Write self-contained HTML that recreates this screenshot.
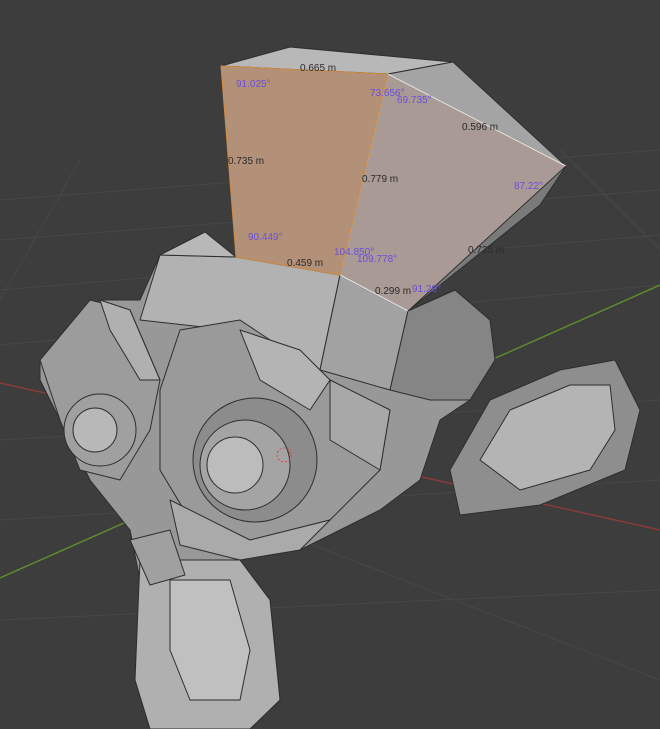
<!DOCTYPE html>
<html><head><meta charset="utf-8"><style>
html,body{margin:0;padding:0;background:#3d3d3d;width:660px;height:729px;overflow:hidden}
svg{display:block}
text{font-family:"Liberation Sans",sans-serif;font-size:10px}
.b{fill:#6a4fd8}.k{fill:#2a2a2a}
</style></head><body>
<svg width="660" height="729" viewBox="0 0 660 729">
<rect width="660" height="729" fill="#3d3d3d"/>
<g stroke="#474747" stroke-width="1">
<line x1="0" y1="200" x2="660" y2="150"/><line x1="0" y1="240" x2="660" y2="190"/>
<line x1="0" y1="290" x2="660" y2="235"/><line x1="0" y1="345" x2="660" y2="285"/>
<line x1="0" y1="440" x2="660" y2="400"/><line x1="0" y1="520" x2="660" y2="480"/>
<line x1="0" y1="620" x2="660" y2="590"/><line x1="300" y1="540" x2="660" y2="680"/>
<line x1="80" y1="160" x2="0" y2="300"/><line x1="560" y1="150" x2="660" y2="250"/>
</g>
<line x1="0" y1="383" x2="660" y2="530" stroke="#8a3b3b" stroke-width="1.5"/>
<line x1="0" y1="578" x2="660" y2="285" stroke="#5f8a2e" stroke-width="1.5"/>
<g stroke="#2e2e2e" stroke-width="1" stroke-linejoin="round">
<!-- head -->
<polygon fill="#989898" points="40,360 100,300 140,300 160,255 205,232 236,257 340,275 408,311 455,290 490,320 495,360 470,400 440,420 420,480 380,510 300,550 240,560 270,600 280,700 250,729 150,729 135,680 140,580 130,530 90,480 70,440 40,380"/>
<polygon fill="#b2b2b2" points="160,255 236,257 340,275 320,370 230,330 140,320"/>
<polygon fill="#a2a2a2" points="340,275 408,311 390,390 320,370"/>
<polygon fill="#858585" points="408,311 455,290 490,320 495,360 470,400 430,400 390,390"/>
<polygon fill="#b8b8b8" points="205,232 160,255 236,257"/>
<polygon fill="#9a9a9a" points="180,330 240,320 330,380 390,410 380,470 330,520 250,540 190,520 160,470 160,390"/>
<polygon fill="#b4b4b4" points="240,330 300,350 330,380 310,410 260,380"/>
<polygon fill="#a8a8a8" points="330,380 390,410 380,470 330,440"/>
<polygon fill="#aaaaaa" points="170,500 250,540 330,520 300,550 240,560 180,545"/>
<circle cx="255" cy="460" r="62" fill="#8c8c8c"/>
<circle cx="245" cy="465" r="45" fill="#a4a4a4"/>
<circle cx="235" cy="465" r="28" fill="#bcbcbc"/>
<polygon fill="#9c9c9c" points="40,360 90,300 130,310 160,380 150,430 120,480 80,470 60,420"/>
<polygon fill="#b0b0b0" points="100,300 130,310 160,380 140,380 110,330"/>
<circle cx="100" cy="430" r="36" fill="#a0a0a0"/>
<circle cx="95" cy="430" r="22" fill="#b8b8b8"/>
<polygon fill="#b0b0b0" points="140,560 240,560 270,600 280,700 250,729 150,729 135,680"/>
<polygon fill="#c0c0c0" points="170,580 230,580 250,650 240,700 190,700 170,650"/>
<polygon fill="#a0a0a0" points="130,540 170,530 185,575 150,585"/>
<!-- ear -->
<polygon fill="#8e8e8e" points="450,470 490,400 560,370 615,360 640,410 625,470 540,505 460,515"/>
<polygon fill="#b4b4b4" points="480,460 510,410 570,385 610,385 615,430 590,470 520,490"/>
<!-- extrusion -->
<polygon fill="#b8b8b8" points="221,66 290,47 453,62 388,74"/>
<polygon fill="#a4a4a4" points="453,62 566,166 388,74"/>
<polygon fill="#aa9a96" stroke="#e8e8e8" points="388,74 566,166 408,311 340,275"/>
<polygon fill="#b39178" stroke="#d08a40" points="221,66 388,74 340,275 236,257"/>
<polygon fill="#7a7a7a" points="566,166 540,205 408,311"/>
</g>
<text x="300" y="71" class="k">0.665 m</text>
<text x="236" y="87" class="b">91.025°</text>
<text x="370" y="96" class="b">73.656°</text>
<text x="397" y="103" class="b">69.735°</text>
<text x="462" y="130" class="k">0.596 m</text>
<text x="228" y="164" class="k">0.735 m</text>
<text x="362" y="182" class="k">0.779 m</text>
<text x="514" y="189" class="b">87.22°</text>
<text x="248" y="240" class="b">90.449°</text>
<text x="334" y="255" class="b">104.850°</text>
<text x="357" y="262" class="b">109.778°</text>
<text x="287" y="266" class="k">0.459 m</text>
<text x="468" y="253" class="k">0.735 m</text>
<text x="375" y="294" class="k">0.299 m</text>
<text x="412" y="292" class="b">91.29°</text>
<circle cx="284" cy="455" r="7" fill="none" stroke="#e04040" stroke-dasharray="2 2"/>
</svg>
</body></html>
